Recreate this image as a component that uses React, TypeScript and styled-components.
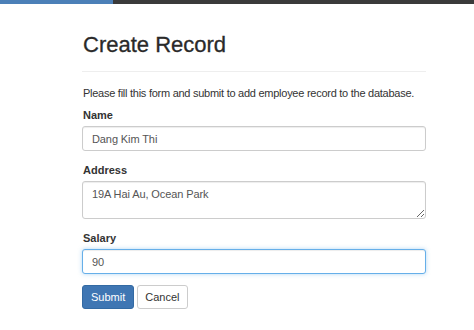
import React, { useState } from 'react';
import styled, { createGlobalStyle } from 'styled-components';

const GlobalStyle = createGlobalStyle`
  html, body {
    margin: 0;
    padding: 0;
    background: #ffffff;
  }
  body {
    font-family: "Liberation Sans", Arial, sans-serif;
    color: #333333;
  }
`;

// Barra superior (pestaña activa azul + resto oscuro)
const TopBar = styled.div`
  display: flex;
  height: 4px;
  background: #3a3a3a;
`;

const TopBarActive = styled.div`
  width: 113px;
  background: #4c80b8;
`;

const Page = styled.div`
  padding: 0 48px 0 82px;
`;

const Header = styled.div`
  padding-top: 28px;
  padding-bottom: 13px;
  margin-bottom: 13px;
  border-bottom: 1px solid #eeeeee;
`;

const Title = styled.h2`
  margin: 0;
  padding-left: 1px;
  font-size: 22px;
  font-weight: 400;
  line-height: 26px;
  color: #2a2a2a;
  -webkit-text-stroke: 0.3px #2a2a2a;
`;

const Intro = styled.p`
  margin: 0 0 6px 1px;
  font-size: 11px;
  letter-spacing: -0.26px;
  line-height: 16px;
  white-space: nowrap;
`;

const FormGroup = styled.div`
  display: flex;
  flex-direction: column;
  margin-bottom: 11px;
`;

const Label = styled.label`
  font-size: 11px;
  font-weight: 700;
  line-height: 16px;
  margin: 0 0 3px 1px;
`;

const Input = styled.input<{ $focus?: boolean }>`
  box-sizing: border-box;
  width: 100%;
  height: 25px;
  padding: 0 9px;
  font-family: "Liberation Sans", Arial, sans-serif;
  font-size: 11px;
  letter-spacing: -0.1px;
  color: #555555;
  border: 1px solid ${props => (props.$focus ? '#66afe9' : '#cccccc')};
  border-radius: 3px;
  box-shadow: ${props =>
    props.$focus
      ? 'inset 0 1px 1px rgba(0,0,0,.075), 0 0 4px rgba(102,175,233,.5)'
      : 'inset 0 1px 1px rgba(0,0,0,.075)'};
  outline: none;
`;

const TextArea = styled.textarea`
  box-sizing: border-box;
  width: 100%;
  height: 38px;
  padding: 5px 9px;
  font-family: "Liberation Sans", Arial, sans-serif;
  font-size: 11px;
  letter-spacing: -0.1px;
  line-height: 15px;
  color: #555555;
  border: 1px solid #cccccc;
  border-radius: 3px;
  box-shadow: inset 0 1px 1px rgba(0,0,0,.075);
  outline: none;
  display: block;
`;

const Actions = styled.div`
  display: flex;
  gap: 3px;
  margin-top: 1px;
`;

const Button = styled.button<{ $primary?: boolean }>`
  box-sizing: border-box;
  height: 24px;
  padding: 0 ${props => (props.$primary ? '8px' : '7px')};
  font-family: "Liberation Sans", Arial, sans-serif;
  font-size: 11px;
  border-radius: 3px;
  cursor: pointer;
  color: ${props => (props.$primary ? '#ffffff' : '#333333')};
  background: ${props => (props.$primary ? '#3f76b3' : '#ffffff')};
  border: 1px solid ${props => (props.$primary ? '#336aa3' : '#cccccc')};
`;

export default function App() {
  const [name, setName] = useState('Dang Kim Thi');
  const [address, setAddress] = useState('19A Hai Au, Ocean Park');
  const [salary, setSalary] = useState('90');

  return (
    <>
      <GlobalStyle />
      <TopBar>
        <TopBarActive />
      </TopBar>
      <Page>
        <Header>
          <Title>Create Record</Title>
        </Header>
        <Intro>Please fill this form and submit to add employee record to the database.</Intro>
        <form onSubmit={e => e.preventDefault()}>
          <FormGroup>
            <Label>Name</Label>
            <Input value={name} onChange={e => setName(e.target.value)} />
          </FormGroup>
          <FormGroup>
            <Label>Address</Label>
            <TextArea value={address} onChange={e => setAddress(e.target.value)} />
          </FormGroup>
          <FormGroup>
            <Label>Salary</Label>
            <Input $focus value={salary} onChange={e => setSalary(e.target.value)} />
          </FormGroup>
          <Actions>
            <Button $primary type="submit">Submit</Button>
            <Button type="button">Cancel</Button>
          </Actions>
        </form>
      </Page>
    </>
  );
}
